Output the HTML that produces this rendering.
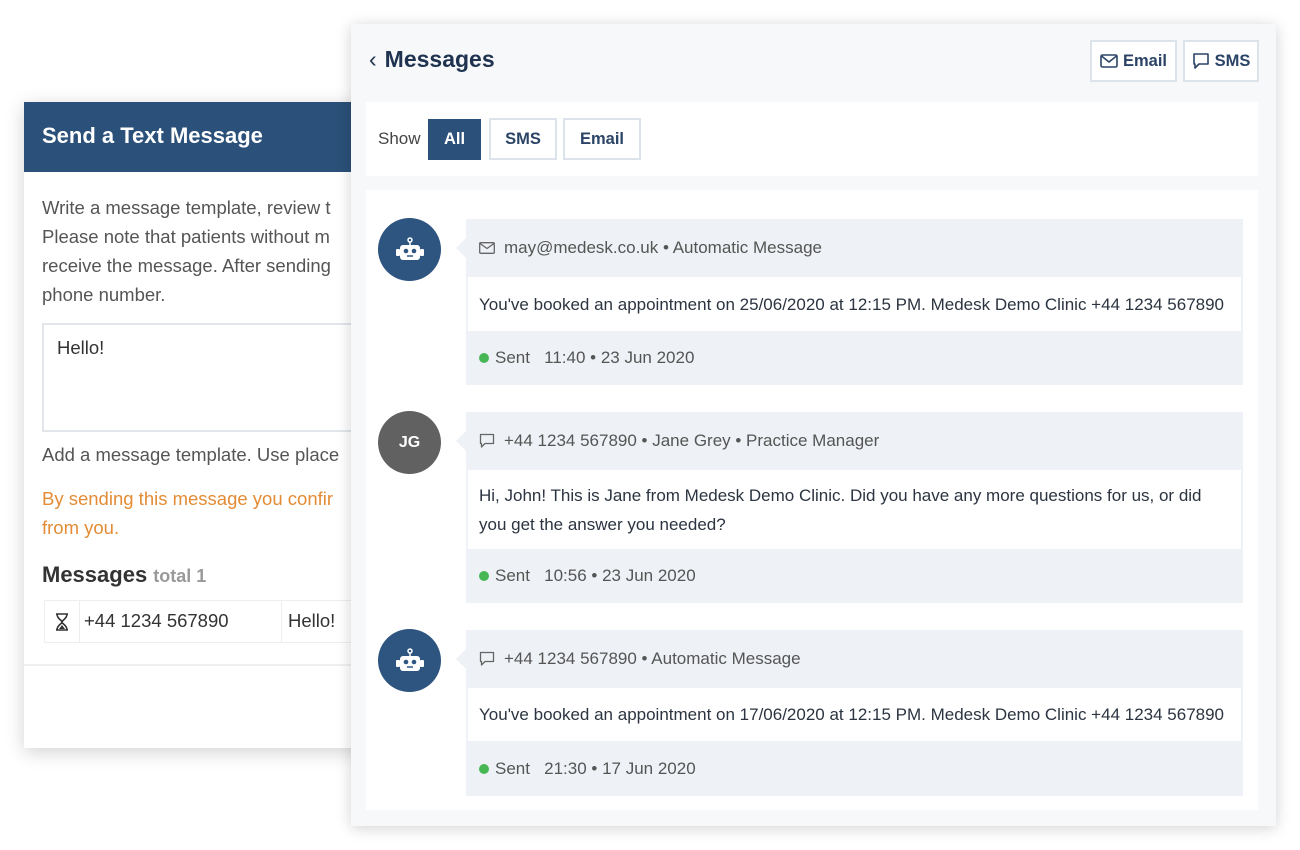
<!DOCTYPE html>
<html><head><style>
*{box-sizing:border-box;margin:0;padding:0}
body{width:1300px;height:850px;background:#fff;font-family:"Liberation Sans",sans-serif;position:relative;overflow:hidden}
.abs{position:absolute}
#left{left:24px;top:102px;width:340px;height:646px;background:#fff;box-shadow:0 4px 18px rgba(0,0,0,.18);overflow:hidden}
#left .hd{height:70px;background:#2b5079;color:#fff;font-weight:bold;font-size:22px;padding:21px 0 0 18px}
#left .p{color:#555;font-size:18.5px;line-height:29px;position:absolute;left:18px;white-space:nowrap}
#right{left:351px;top:24px;width:925px;height:802px;background:#f6f8fa;box-shadow:0 2px 14px rgba(0,0,0,.18)}
.btn{position:absolute;border:2px solid #dde3ea;background:#fff;color:#2b4466;font-weight:bold;font-size:16.5px;display:flex;align-items:center;justify-content:center;gap:5px}
.av{position:absolute;left:12px;width:63px;height:63px;border-radius:50%;background:#2d5580;display:flex;align-items:center;justify-content:center;color:#fff;font-weight:bold;font-size:16px}
.card{position:absolute;left:100px;width:777px;background:#eef1f5}
.card:before{content:"";position:absolute;left:-10px;top:19px;border:10px solid transparent;border-left:0;border-right-color:#eef1f5}
.ch{height:58px;display:flex;align-items:center;padding-left:13px;color:#555;font-size:17px;gap:9px}
.cb{background:#fff;margin:0 2px;padding:0 11px;color:#2b3440;font-size:17px;line-height:29px;display:flex;align-items:center}
.cf{height:54px;display:flex;align-items:center;padding-left:13px;color:#555;font-size:17px}
.dot{width:10px;height:10px;border-radius:50%;background:#47b755;margin-right:6px}
</style></head><body>
<div id="left" class="abs">
<div class="hd">Send a Text Message</div>
<div class="p" style="top:91px">Write a message template, review t<br>Please note that patients without m<br>receive the message. After sending<br>phone number.</div>
<div class="abs" style="left:18px;top:221px;width:330px;height:109px;border:2px solid #e2e5e9;padding:12px 13px;font-size:18.5px;color:#333">Hello!</div>
<div class="p" style="top:338px">Add a message template. Use place</div>
<div class="p" style="top:382px;color:#e38c35">By sending this message you confir<br>from you.</div>
<div class="abs" style="left:18px;top:460px;font-size:22px;font-weight:bold;color:#333">Messages <span style="font-size:18px;color:#999">total 1</span></div>
<div class="abs" style="left:20px;top:498px;width:320px;height:43px;border:1px solid #eceef0;display:flex;font-size:18.5px;color:#333">
<div style="width:35px;border-right:1px solid #eceef0;display:flex;align-items:center;justify-content:center"><svg width="14" height="18" viewBox="0 0 14 18"><path d="M1 1h12M1 17h12M2 1c0 5 5 6 5 8s-5 3-5 8M12 1c0 5-5 6-5 8s5 3 5 8" stroke="#333" stroke-width="1.6" fill="none"/><path d="M4 16l3-4 3 4z" fill="#333"/></svg></div>
<div style="width:202px;border-right:1px solid #eceef0;padding:9px 0 0 4px">+44 1234 567890</div>
<div style="padding:9px 0 0 6px">Hello!</div></div>
<div class="abs" style="left:0;top:562px;width:340px;height:2px;background:#eef0f2"></div>
</div>
<div id="right" class="abs">
<div class="abs" style="left:18px;top:22px;font-size:23px;font-weight:bold;color:#1f3350"><span style="font-weight:normal;margin-right:8px">&#8249;</span>Messages</div>
<div class="btn" style="left:739px;top:16px;width:87px;height:42px"><svg width="18" height="14" viewBox="0 0 18 14"><rect x="1" y="1" width="16" height="12" rx="1.5" stroke="#2b4466" stroke-width="1.6" fill="none"/><path d="M1.5 2l7.5 6 7.5-6" stroke="#2b4466" stroke-width="1.6" fill="none"/></svg>Email</div>
<div class="btn" style="left:832px;top:16px;width:76px;height:42px"><svg width="18" height="18" viewBox="0 0 18 18"><path d="M2 2h14v10H7l-4 4v-4H2z" stroke="#2b4466" stroke-width="1.6" fill="none" stroke-linejoin="round"/></svg>SMS</div>
<div class="abs" style="left:15px;top:78px;width:892px;height:74px;background:#fff">
<div class="abs" style="left:12px;top:27px;font-size:17px;color:#444">Show</div>
<div class="btn" style="left:62px;top:17px;width:53px;height:41px;background:#2b5079;color:#fff;border-color:#2b5079">All</div>
<div class="btn" style="left:123px;top:16px;width:68px;height:42px">SMS</div>
<div class="btn" style="left:197px;top:16px;width:78px;height:42px">Email</div>
</div>
<div class="abs" style="left:15px;top:166px;width:892px;height:620px;background:#fff">
<div class="av" style="top:28px"><svg width="30" height="26" viewBox="0 0 30 26"><circle cx="15" cy="3" r="2" fill="none" stroke="#fff" stroke-width="1.5"/><path d="M15 5v3" stroke="#fff" stroke-width="1.5"/><rect x="5" y="8" width="20" height="15" rx="3" fill="#fff"/><rect x="1" y="12" width="4" height="7" rx="1" fill="#fff"/><rect x="25" y="12" width="4" height="7" rx="1" fill="#fff"/><circle cx="11" cy="14" r="2.3" fill="#2d5580"/><circle cx="19" cy="14" r="2.3" fill="#2d5580"/><path d="M12 19h6" stroke="#2d5580" stroke-width="1.5"/></svg></div>
<div class="card" style="top:29px"><div class="ch"><svg width="16" height="12" viewBox="0 0 16 12"><rect x=".7" y=".7" width="14.6" height="10.6" rx="1" stroke="#666" stroke-width="1.3" fill="none"/><path d="M1 1.5l7 5 7-5" stroke="#666" stroke-width="1.3" fill="none"/></svg>may@medesk.co.uk • Automatic Message</div><div class="cb" style="height:54px">You've booked an appointment on 25/06/2020 at 12:15 PM. Medesk Demo Clinic +44 1234 567890</div><div class="cf"><span class="dot"></span>Sent&nbsp;&nbsp;&nbsp;11:40 • 23 Jun 2020</div></div>
<div class="av" style="top:221px;background:#616161">JG</div>
<div class="card" style="top:222px"><div class="ch"><svg width="16" height="16" viewBox="0 0 16 16"><path d="M1.5 1.5h13v9H6l-3.5 3.5v-3.5h-1z" stroke="#666" stroke-width="1.3" fill="none" stroke-linejoin="round"/></svg>+44 1234 567890 • Jane Grey • Practice Manager</div><div class="cb" style="height:79px">Hi, John! This is Jane from Medesk Demo Clinic. Did you have any more questions for us, or did<br>you get the answer you needed?</div><div class="cf"><span class="dot"></span>Sent&nbsp;&nbsp;&nbsp;10:56 • 23 Jun 2020</div></div>
<div class="av" style="top:439px"><svg width="30" height="26" viewBox="0 0 30 26"><circle cx="15" cy="3" r="2" fill="none" stroke="#fff" stroke-width="1.5"/><path d="M15 5v3" stroke="#fff" stroke-width="1.5"/><rect x="5" y="8" width="20" height="15" rx="3" fill="#fff"/><rect x="1" y="12" width="4" height="7" rx="1" fill="#fff"/><rect x="25" y="12" width="4" height="7" rx="1" fill="#fff"/><circle cx="11" cy="14" r="2.3" fill="#2d5580"/><circle cx="19" cy="14" r="2.3" fill="#2d5580"/><path d="M12 19h6" stroke="#2d5580" stroke-width="1.5"/></svg></div>
<div class="card" style="top:440px"><div class="ch"><svg width="16" height="16" viewBox="0 0 16 16"><path d="M1.5 1.5h13v9H6l-3.5 3.5v-3.5h-1z" stroke="#666" stroke-width="1.3" fill="none" stroke-linejoin="round"/></svg>+44 1234 567890 • Automatic Message</div><div class="cb" style="height:53px">You've booked an appointment on 17/06/2020 at 12:15 PM. Medesk Demo Clinic +44 1234 567890</div><div class="cf" style="height:55px"><span class="dot"></span>Sent&nbsp;&nbsp;&nbsp;21:30 • 17 Jun 2020</div></div>
</div>
</div>
</body></html>
